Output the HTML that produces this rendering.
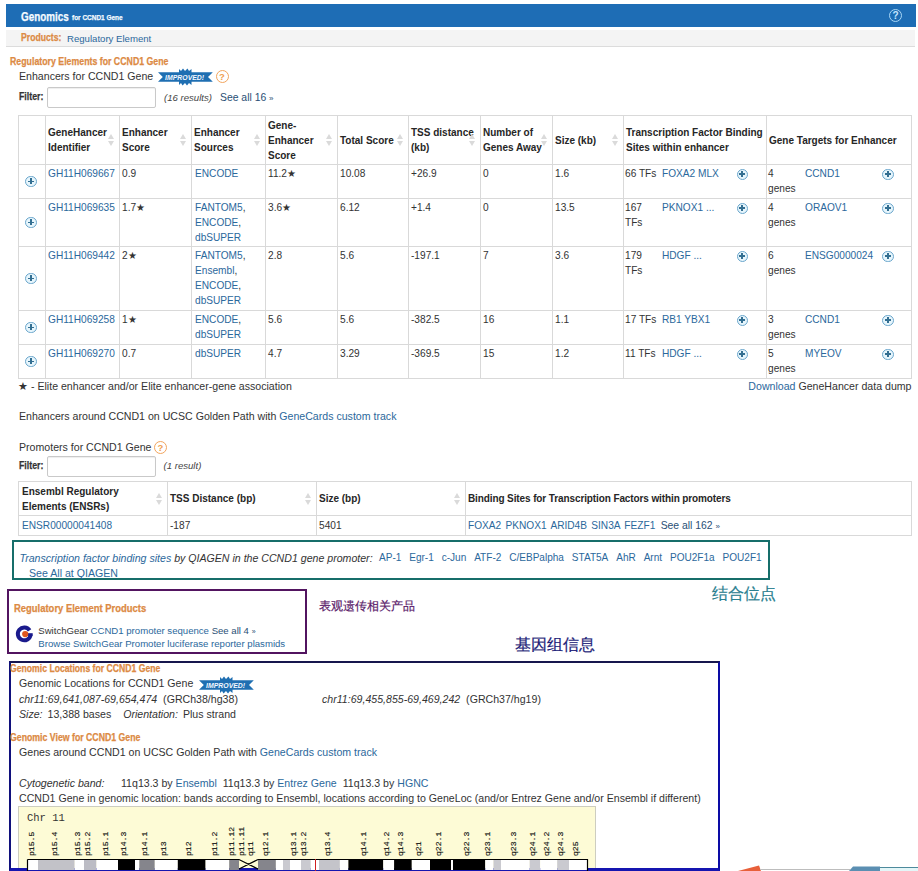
<!DOCTYPE html>
<html><head><meta charset="utf-8">
<style>
*{box-sizing:border-box}
html,body{margin:0;padding:0;background:#fff;width:918px;height:871px;overflow:hidden;position:relative}
body{font-family:"Liberation Sans",sans-serif;font-size:10.6px;color:#333;line-height:12px}
.a{position:absolute;white-space:nowrap}
a{color:#2b689c;text-decoration:none}
.cd{position:absolute;white-space:nowrap;font-weight:bold;transform-origin:0 0;-webkit-text-stroke:0.25px currentColor}
.or{color:#dc8a44}
.inp{position:absolute;border:1px solid #c9c9c9;border-radius:2px;background:#fff;box-shadow:inset 0 1px 1px #eee}
table.t{position:absolute;border-collapse:separate;border-spacing:0;table-layout:fixed;border-top:1px solid #d9d9d9;border-left:1px solid #d9d9d9}
table.t td{border-right:1px solid #d9d9d9;border-bottom:1px solid #d9d9d9;padding:1px 2px;vertical-align:top;line-height:15px;overflow:hidden;font-size:10.15px}
table.t tr.h td{padding:1px 2px}
table.t tr.h td{font-weight:bold;font-size:10px;vertical-align:middle;position:relative;color:#262626;line-height:15px}
.srt{position:absolute;right:5px;top:50%;width:6px;height:12px;margin-top:-6px}
.srt:before{content:"";position:absolute;left:0;top:0;border-left:3px solid transparent;border-right:3px solid transparent;border-bottom:5px solid #dadada}
.srt:after{content:"";position:absolute;left:0;bottom:0;border-left:3px solid transparent;border-right:3px solid transparent;border-top:5px solid #dadada}
.pl{display:inline-block;width:11.5px;height:11.5px;border-radius:50%;border:1px solid #6aa6cc;background:#e6f5fc;position:relative;vertical-align:middle}
.pl:before{content:"";position:absolute;left:1.75px;top:3.95px;width:6px;height:1.6px;background:#336f92}
.pl:after{content:"";position:absolute;left:3.95px;top:1.75px;width:1.6px;height:6px;background:#336f92}
td.pc{vertical-align:middle !important;text-align:center;padding:0 2px 2px 0 !important}
.sub{position:relative;height:100%}
.sub .c{position:absolute;left:-1px;top:0;width:36px;white-space:normal}
.sub .n{position:absolute;left:36px;top:0;white-space:nowrap}
.sub .p{position:absolute;top:2.5px}
.help{position:absolute;width:13px;height:13px;border-radius:50%;border:1.3px solid #f2a55e;color:#f0a050;font-size:9.5px;font-weight:bold;text-align:center;line-height:11px}
.cl{position:absolute;top:856px;width:24px;height:8px;transform:rotate(-90deg);transform-origin:0 0;font-family:"Liberation Mono",monospace;font-size:8.1px;line-height:8px;color:#111;white-space:nowrap;-webkit-text-stroke:0.15px #111}
.sa{color:#2a4f75}
.q a{margin-left:7.9px}
</style></head><body>
<!-- header -->
<div class="a" style="left:6px;top:4px;width:910px;height:23px;background:#1e6db5"></div>
<div class="cd" style="left:21px;top:11.2px;color:#f4faff;font-size:11.9px;transform:scaleX(0.828)">Genomics</div>
<div class="cd" style="left:71.5px;top:12.3px;color:#f4faff;font-size:7.27px;transform:scaleX(0.89)">for CCND1 Gene</div>
<div class="a" style="left:889px;top:9px;width:13px;height:13px;border-radius:50%;border:1.2px solid #a8d6f5;color:#c4e6ff;font-size:10px;font-weight:bold;text-align:center;line-height:11px">?</div>

<div class="a" style="left:6px;top:29.5px;width:909px;height:17.5px;background:#f4f4f4;border-bottom:1px solid #dcdcdc"></div>
<div class="cd or" style="left:21px;top:32.4px;font-size:10.17px;transform:scaleX(0.851)">Products:</div>
<div class="a" style="left:67px;top:32.5px;font-size:9.6px"><a>Regulatory Element</a></div>

<!-- regulatory elements -->
<div class="cd or" style="left:10.4px;top:56.3px;font-size:10.32px;transform:scaleX(0.851)">Regulatory Elements for CCND1 Gene</div>
<div class="a" style="left:19px;top:69.8px;">Enhancers for CCND1 Gene</div>
<svg class="a" style="left:157px;top:68px" width="57" height="18" viewBox="0 0 57 18">
<path d="M1 4.2 H55.8 L51 9 L55.8 13.7 H1 L5.8 9 Z" fill="#1f6fb2"/>
<path d="M22 1 L24 3 L26 0.6 L28 3 L30.5 0.6 L32 3 L34.5 1 L34.5 17 L32 15 L30 17.4 L28 15 L25.5 17.4 L24 15 L22 17 Z" fill="#1f6fb2"/>
<text x="27.6" y="11.7" text-anchor="middle" font-family="Liberation Sans" font-weight="bold" font-style="italic" font-size="6.9px" fill="#f2f8ff" textLength="39" lengthAdjust="spacingAndGlyphs">IMPROVED!</text>
</svg>
<div class="help" style="left:215.5px;top:70px">?</div>

<div class="cd" style="left:19px;top:90.2px;font-size:10.9px;transform:scaleX(0.806);color:#333">Filter:</div>
<div class="inp" style="left:47px;top:87px;width:109px;height:21px"></div>
<div class="a" style="left:164px;top:92px;font-style:italic;font-size:9.6px;color:#444">(16 results)</div>
<div class="a sa" style="left:220px;top:91.5px;font-size:10.4px">See all 16 <span style="font-size:8px">»</span></div>
<table class="t" style="left:18px;top:115px;width:894px">
<colgroup><col style="width:27px"><col style="width:74px"><col style="width:72px"><col style="width:74px"><col style="width:72px"><col style="width:71px"><col style="width:72px"><col style="width:72px"><col style="width:71px"><col style="width:143px"><col style="width:145px"></colgroup>
<tr class="h" style="height:49px"><td></td><td>GeneHancer Identifier<i class="srt"></i></td><td>Enhancer Score<i class="srt"></i></td><td>Enhancer Sources<i class="srt"></i></td><td>Gene-Enhancer Score<i class="srt"></i></td><td>Total Score<i class="srt"></i></td><td>TSS distance (kb)<i class="srt"></i></td><td>Number of Genes Away<i class="srt"></i></td><td>Size (kb)<i class="srt"></i></td><td>Transcription Factor Binding Sites within enhancer</td><td>Gene Targets for Enhancer</td></tr>
<tr style="height:34px"><td class="pc"><i class="pl"></i></td><td><a>GH11H069667</a></td><td>0.9</td><td style="padding-left:3px"><a>ENCODE</a></td><td>11.2★</td><td>10.08</td><td>+26.9</td><td>0</td><td>1.6</td>
<td><div class="sub"><div class="c">66 TFs</div><div class="n"><a>FOXA2 MLX</a></div><i class="pl p" style="left:110.5px"></i></div></td>
<td><div class="sub"><div class="c">4 genes</div><div class="n"><a>CCND1</a></div><i class="pl p" style="left:113px"></i></div></td></tr>
<tr style="height:48px"><td class="pc"><i class="pl"></i></td><td><a>GH11H069635</a></td><td>1.7★</td><td style="padding-left:3px"><a>FANTOM5</a>,<br><a>ENCODE</a>,<br><a>dbSUPER</a></td><td>3.6★</td><td>6.12</td><td>+1.4</td><td>0</td><td>13.5</td>
<td><div class="sub"><div class="c">167 TFs</div><div class="n"><a>PKNOX1 ...</a></div><i class="pl p" style="left:110.5px"></i></div></td>
<td><div class="sub"><div class="c">4 genes</div><div class="n"><a>ORAOV1</a></div><i class="pl p" style="left:113px"></i></div></td></tr>
<tr style="height:64px"><td class="pc"><i class="pl"></i></td><td><a>GH11H069442</a></td><td>2★</td><td style="padding-left:3px"><a>FANTOM5</a>,<br><a>Ensembl</a>,<br><a>ENCODE</a>,<br><a>dbSUPER</a></td><td>2.8</td><td>5.6</td><td>-197.1</td><td>7</td><td>3.6</td>
<td><div class="sub"><div class="c">179 TFs</div><div class="n"><a>HDGF ...</a></div><i class="pl p" style="left:110.5px"></i></div></td>
<td><div class="sub"><div class="c">6 genes</div><div class="n"><a>ENSG0000024</a></div><i class="pl p" style="left:113px"></i></div></td></tr>
<tr style="height:34px"><td class="pc"><i class="pl"></i></td><td><a>GH11H069258</a></td><td>1★</td><td style="padding-left:3px"><a>ENCODE</a>,<br><a>dbSUPER</a></td><td>5.6</td><td>5.6</td><td>-382.5</td><td>16</td><td>1.1</td>
<td><div class="sub"><div class="c">17 TFs</div><div class="n"><a>RB1 YBX1</a></div><i class="pl p" style="left:110.5px"></i></div></td>
<td><div class="sub"><div class="c">3 genes</div><div class="n"><a>CCND1</a></div><i class="pl p" style="left:113px"></i></div></td></tr>
<tr style="height:34px"><td class="pc"><i class="pl"></i></td><td><a>GH11H069270</a></td><td>0.7</td><td style="padding-left:3px"><a>dbSUPER</a></td><td>4.7</td><td>3.29</td><td>-369.5</td><td>15</td><td>1.2</td>
<td><div class="sub"><div class="c">11 TFs</div><div class="n"><a>HDGF ...</a></div><i class="pl p" style="left:110.5px"></i></div></td>
<td><div class="sub"><div class="c">5 genes</div><div class="n"><a>MYEOV</a></div><i class="pl p" style="left:113px"></i></div></td></tr>
</table><div class="a" style="left:18px;top:379.8px;">★ - Elite enhancer and/or Elite enhancer-gene association</div>
<div class="a" style="right:6.5px;top:380px;"><a>Download</a> GeneHancer data dump</div>
<div class="a" style="left:19px;top:409.6px;">Enhancers around CCND1 on UCSC Golden Path with <a>GeneCards custom track</a></div>

<div class="a" style="left:19px;top:441px;">Promoters for CCND1 Gene</div>
<div class="help" style="left:154px;top:441px">?</div>
<div class="cd" style="left:19px;top:459px;font-size:10.9px;transform:scaleX(0.806);color:#333">Filter:</div>
<div class="inp" style="left:47px;top:455.5px;width:109px;height:21px"></div>
<div class="a" style="left:163.5px;top:459.7px;font-style:italic;font-size:9.6px;color:#444">(1 result)</div>

<table class="t" style="left:18px;top:481px;width:894px">
<colgroup><col style="width:149px"><col style="width:149px"><col style="width:149px"><col style="width:446px"></colgroup>
<tr class="h" style="height:34px"><td style="padding-left:3px;padding-right:14px">Ensembl Regulatory Elements (ENSRs)<i class="srt"></i></td><td>TSS Distance (bp)<i class="srt"></i></td><td>Size (bp)<i class="srt"></i></td><td style="letter-spacing:-0.11px">Binding Sites for Transcription Factors within promoters</td></tr>
<tr style="height:19px"><td style="padding:2px 2px 0 3px"><a>ENSR00000041408</a></td><td style="padding-top:2px">-187</td><td style="padding-top:2px">5401</td><td style="padding-top:2px;word-spacing:1.5px"><a>FOXA2</a> <a>PKNOX1</a> <a>ARID4B</a> <a>SIN3A</a> <a>FEZF1</a> <span class="sa" style="font-size:10.4px;word-spacing:0;margin-left:1px">See all 162 <span style="font-size:8px">»</span></span></td></tr>
</table>

<div class="a" style="left:12px;top:540px;width:758px;height:40px;border:2px solid #166e6a"></div>
<div class="a" style="left:19.5px;top:552px;font-style:italic"><a>Transcription factor binding sites</a> by QIAGEN in the CCND1 gene promoter:</div>
<div class="a q" style="left:371.1px;top:552px;font-size:10.05px"><a>AP-1</a><a>Egr-1</a><a>c-Jun</a><a>ATF-2</a><a>C/EBPalpha</a><a>STAT5A</a><a>AhR</a><a>Arnt</a><a>POU2F1a</a><a>POU2F1</a></div>
<div class="a" style="left:29px;top:567px;"><a>See All at QIAGEN</a></div>
<div class="a" style="left:712px;top:583.8px;font-size:16px;line-height:20px;color:#2a8090;-webkit-text-stroke:0.2px #2a8090">结合位点</div>

<div class="a" style="left:7px;top:589px;width:300px;height:65px;border:2px solid #521460"></div>
<div class="cd or" style="left:14px;top:602.1px;font-size:10.9px;transform:scaleX(0.867)">Regulatory Element Products</div>
<svg class="a" style="left:15px;top:625px" width="19" height="19" viewBox="0 0 19 19">
<path d="M14.6 5.4 A6.4 6.4 0 1 0 15.6 9.6" stroke="#1a1a8c" stroke-width="4" fill="none"/>
<rect x="12.2" y="8.2" width="5.5" height="2.6" fill="#1a1a8c"/>
<circle cx="10.2" cy="9.1" r="3.1" fill="#e0561e"/>
</svg>
<div class="a" style="left:38.3px;top:625.2px;font-size:9.6px">SwitchGear <a>CCND1 promoter sequence</a> <span class="sa">See all 4 <span style="font-size:7px">»</span></span></div>
<div class="a" style="left:38.3px;top:638.3px;font-size:9.6px"><a>Browse SwitchGear Promoter luciferase reporter plasmids</a></div>
<div class="a" style="left:319px;top:598px;font-size:12px;line-height:16px;color:#5a1a6a;-webkit-text-stroke:0.2px #5a1a6a">表观遗传相关产品</div>

<div class="a" style="left:515px;top:635px;font-size:16px;line-height:20px;color:#1c1c78;-webkit-text-stroke:0.2px #1c1c78">基因组信息</div>
<div class="a" style="left:18px;top:806px;width:578px;height:70px;background:#fdfbd6;border:1px solid #cdcdc0"></div>
<div class="a" style="left:9px;top:661px;width:711px;height:210px;border:2px solid #10107c;border-top-color:#16164e;border-right-color:#0c0ca4;border-bottom-color:#1515b0;border-bottom-width:3px"></div>
<div class="cd or" style="left:10px;top:663.4px;font-size:10.17px;transform:scaleX(0.851)">Genomic Locations for CCND1 Gene</div>
<div class="a" style="left:19px;top:677px;">Genomic Locations for CCND1 Gene</div>
<svg class="a" style="left:197.6px;top:675.5px" width="57" height="18" viewBox="0 0 57 18">
<path d="M1 4.2 H55.8 L51 9 L55.8 13.7 H1 L5.8 9 Z" fill="#1f6fb2"/>
<path d="M22 1 L24 3 L26 0.6 L28 3 L30.5 0.6 L32 3 L34.5 1 L34.5 17 L32 15 L30 17.4 L28 15 L25.5 17.4 L24 15 L22 17 Z" fill="#1f6fb2"/>
<text x="27.6" y="11.7" text-anchor="middle" font-family="Liberation Sans" font-weight="bold" font-style="italic" font-size="6.9px" fill="#f2f8ff" textLength="39" lengthAdjust="spacingAndGlyphs">IMPROVED!</text>
</svg>
<div class="a" style="left:19px;top:693px;"><i>chr11:69,641,087-69,654,474</i>&nbsp; (GRCh38/hg38)</div>
<div class="a" style="left:322px;top:693px;"><i>chr11:69,455,855-69,469,242</i>&nbsp; (GRCh37/hg19)</div>
<div class="a" style="left:19px;top:708.4px;"><i>Size:</i><span style="margin-left:5px">13,388 bases</span><span style="margin-left:12px"><i>Orientation:</i></span><span style="margin-left:5px">Plus strand</span></div>
<div class="cd or" style="left:10px;top:732px;font-size:10.17px;transform:scaleX(0.86)">Genomic View for CCND1 Gene</div>
<div class="a" style="left:19px;top:745.8px;">Genes around CCND1 on UCSC Golden Path with <a>GeneCards custom track</a></div>
<div class="a" style="left:19px;top:777px;"><i>Cytogenetic band:</i></div>
<div class="a" style="left:121px;top:777px;">11q13.3 by <a>Ensembl</a> &nbsp;11q13.3 by <a>Entrez Gene</a> &nbsp;11q13.3 by <a>HGNC</a></div>
<div class="a" style="left:19px;top:791.8px;">CCND1 Gene in genomic location: bands according to Ensembl, locations according to GeneLoc (and/or Entrez Gene and/or Ensembl if different)</div>
<div class="a" style="left:27px;top:812px;font-family:'Liberation Mono',monospace;font-size:10.5px;color:#333">Chr 11</div>
<svg class="a" style="left:0;top:0;overflow:visible" width="918" height="871">
<rect x="27.5" y="860" width="10.5" height="10" fill="#fff"/>
<rect x="38" y="860" width="36.7" height="10" fill="#c2c2c8"/>
<rect x="74.7" y="860" width="9.3" height="10" fill="#fff"/>
<rect x="84" y="860" width="12.5" height="10" fill="#bcbcc4"/>
<rect x="96.5" y="860" width="21.5" height="10" fill="#fff"/>
<rect x="118" y="860" width="17.0" height="10" fill="#000"/>
<rect x="135" y="860" width="4.3" height="10" fill="#fff"/>
<rect x="139.3" y="860" width="15.5" height="10" fill="#85858c"/>
<rect x="154.8" y="860" width="23.0" height="10" fill="#fff"/>
<rect x="177.8" y="860" width="27.8" height="10" fill="#000"/>
<rect x="205.6" y="860" width="23.6" height="10" fill="#fff"/>
<rect x="229.2" y="860" width="9.8" height="10" fill="#85858c"/>
<rect x="258" y="860" width="17.9" height="10" fill="#85858c"/>
<rect x="275.9" y="860" width="7.1" height="10" fill="#fff"/>
<rect x="283" y="860" width="7.0" height="10" fill="#cacad0"/>
<rect x="290" y="860" width="11.0" height="10" fill="#fff"/>
<rect x="301" y="860" width="9.8" height="10" fill="#cacad0"/>
<rect x="310.8" y="860" width="8.2" height="10" fill="#fff"/>
<rect x="319" y="860" width="20.9" height="10" fill="#c4c4ca"/>
<rect x="339.9" y="860" width="8.5" height="10" fill="#fff"/>
<rect x="348.4" y="860" width="34.9" height="10" fill="#000"/>
<rect x="383.3" y="860" width="10.8" height="10" fill="#fff"/>
<rect x="394.1" y="860" width="17.7" height="10" fill="#000"/>
<rect x="411.8" y="860" width="18.2" height="10" fill="#fff"/>
<rect x="430" y="860" width="21.0" height="10" fill="#000"/>
<rect x="451" y="860" width="2.0" height="10" fill="#fff"/>
<rect x="453" y="860" width="32.3" height="10" fill="#000"/>
<rect x="485.3" y="860" width="8.2" height="10" fill="#fff"/>
<rect x="493.5" y="860" width="7.5" height="10" fill="#cacad0"/>
<rect x="501" y="860" width="28.7" height="10" fill="#fff"/>
<rect x="529.7" y="860" width="10.5" height="10" fill="#cacad0"/>
<rect x="540.2" y="860" width="17.0" height="10" fill="#fff"/>
<rect x="557.2" y="860" width="11.8" height="10" fill="#cacad0"/>
<rect x="569" y="860" width="18.5" height="10" fill="#fff"/>
<path d="M27.5 859.5 H239 L258 869 M27.5 859.5 V871 M258 859.5 H587.5 V871 M239 869 L258 859.5" stroke="#000" stroke-width="1.2" fill="none"/>
<line x1="315.5" y1="859" x2="315.5" y2="871" stroke="#d02020" stroke-width="1"/>
</svg>
<div class="cl" style="left:28.4px">p15.5</div>
<div class="cl" style="left:51.3px">p15.4</div>
<div class="cl" style="left:74.2px">p15.3</div>
<div class="cl" style="left:84.0px">p15.2</div>
<div class="cl" style="left:101.6px">p15.1</div>
<div class="cl" style="left:120.0px">p14.3</div>
<div class="cl" style="left:140.8px">p14.1</div>
<div class="cl" style="left:159.8px">p13</div>
<div class="cl" style="left:185.3px">p12</div>
<div class="cl" style="left:211.4px">p11.2</div>
<div class="cl" style="left:227.8px">p11.12</div>
<div class="cl" style="left:237.6px">p11.11</div>
<div class="cl" style="left:247.4px">q11</div>
<div class="cl" style="left:261.8px">q12.1</div>
<div class="cl" style="left:289.9px">q13.1</div>
<div class="cl" style="left:299.7px">q13.2</div>
<div class="cl" style="left:323.8px">q13.4</div>
<div class="cl" style="left:359.7px">q14.1</div>
<div class="cl" style="left:382.6px">q14.2</div>
<div class="cl" style="left:397.3px">q14.3</div>
<div class="cl" style="left:415.3px">q21</div>
<div class="cl" style="left:434.9px">q22.1</div>
<div class="cl" style="left:463.3px">q22.3</div>
<div class="cl" style="left:483.9px">q23.1</div>
<div class="cl" style="left:510.0px">q23.3</div>
<div class="cl" style="left:529.0px">q24.1</div>
<div class="cl" style="left:542.7px">q24.2</div>
<div class="cl" style="left:557.4px">q24.3</div>
<div class="cl" style="left:572.1px">q25</div><svg class="a" style="left:0;top:0" width="918" height="871">
<path d="M738 871 L759 865.5 L761 871 Z" fill="#e8603a"/>
<line x1="760" y1="869.5" x2="850" y2="869.5" stroke="#bdbdbd" stroke-width="1"/>
<rect x="880" y="867" width="38" height="4" fill="#e4f6f8"/>
<line x1="880" y1="867.5" x2="918" y2="867.5" stroke="#4d8a9c" stroke-width="1"/>
<path d="M849 871 L853 866.5 H880 V871 Z" fill="#5b8fb2"/>
</svg>
</body></html>
